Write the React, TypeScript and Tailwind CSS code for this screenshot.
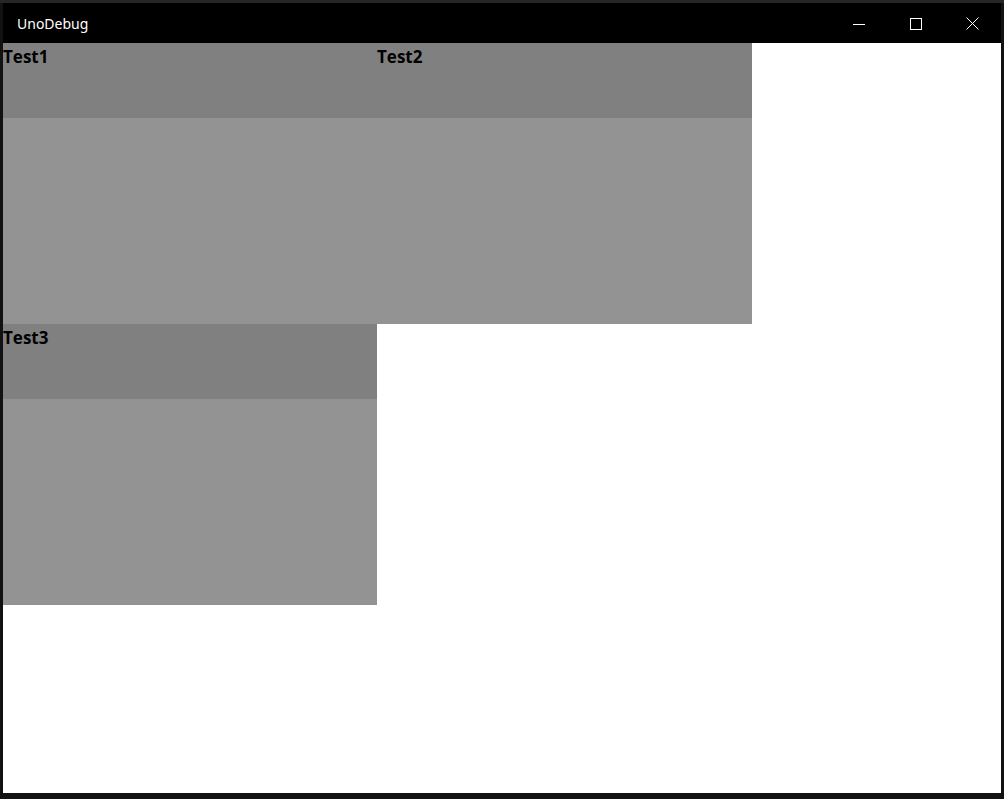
const cells = ['Test1', 'Test2', 'Test3'];

function Cell({ label }: { label: string }) {
  return (
    <div className="flex flex-col h-[281px]">
      <div className="h-[75px] bg-[#808080] pt-px text-[17px] font-bold leading-[26px] text-black">{label}</div>
      <div className="flex-1 bg-[#939393]" />
    </div>
  );
}

export default function App() {
  return (
    <div className="w-[1004px] h-[799px] flex flex-col bg-[#121212] border-t-[3px] border-t-[#262626] px-[3px] pb-[6px] font-['Segoe_UI','Open_Sans',sans-serif]">
      {/* Title bar */}
      <div className="h-[40px] bg-black flex items-center justify-between text-white">
        <span className="pl-[14px] text-[14px] font-['Segoe_UI','Noto_Sans',sans-serif]">UnoDebug</span>
        <div className="flex h-full">
          <button className="w-[57px] h-full flex items-center justify-center pt-px" aria-label="Minimize">
            <svg width="12" height="12" viewBox="0 0 12 12">
              <line x1="0" y1="6.5" x2="12" y2="6.5" stroke="white" strokeWidth="1" />
            </svg>
          </button>
          <button className="w-[57px] h-full flex items-center justify-center pt-px" aria-label="Maximize">
            <svg width="12" height="12" viewBox="0 0 12 12">
              <rect x="0.5" y="0.5" width="11" height="11" fill="none" stroke="white" strokeWidth="1" />
            </svg>
          </button>
          <button className="w-[57px] h-full flex items-center justify-center pt-px" aria-label="Close">
            <svg width="13" height="13" viewBox="0 0 13 13">
              <path d="M0.5 0.5L12.5 12.5M12.5 0.5L0.5 12.5" stroke="white" strokeWidth="1" />
            </svg>
          </button>
        </div>
      </div>

      {/* Content */}
      <div className="flex-1 bg-white">
        <div className="grid grid-cols-[374px_375px] w-[749px]">
          {cells.map((c) => (
            <Cell key={c} label={c} />
          ))}
        </div>
      </div>
    </div>
  );
}
